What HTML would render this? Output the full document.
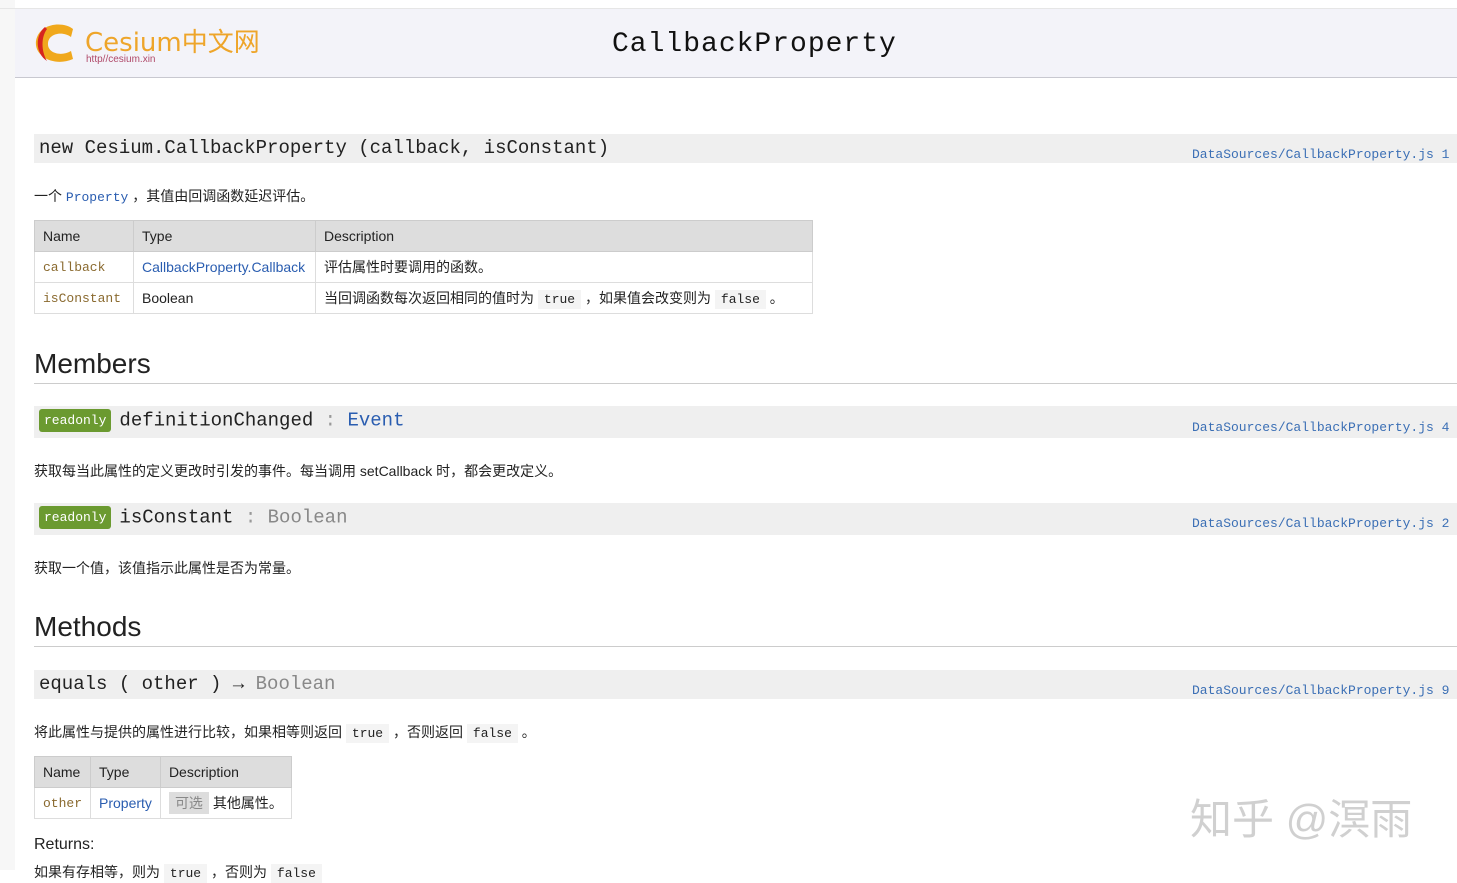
<!DOCTYPE html>
<html><head><meta charset="utf-8"><style>
*{margin:0;padding:0;box-sizing:border-box}
body{width:1457px;height:870px;overflow:hidden;background:#fff;font-family:"Liberation Sans","Noto Sans CJK SC",sans-serif;font-size:14px;color:#222;position:relative}
.strip{position:absolute;left:0;top:0;width:15px;height:870px;background:#f7f7f7}
.topline{position:absolute;left:0;top:8px;width:1457px;border-top:1px solid #e6e6e6}
.hdr{position:absolute;left:15px;top:9px;width:1442px;height:69px;background:#f3f3f9;border-bottom:1px solid #c8c8d0}
.mono{font-family:"Liberation Mono","Noto Sans CJK SC",monospace}
.title{position:absolute;left:612px;top:29px;font-size:28px;letter-spacing:1px;color:#111}
.abs{position:absolute}
.bar{position:absolute;left:34px;width:1423px;background:#efefef}
.src{position:absolute;left:1192px;font-size:13px;color:#3b6fb5;white-space:nowrap}
a,.lk{color:#2a5db0}
table{border-collapse:collapse;position:absolute;left:34px;font-size:14px}
td,th{border:1px solid #ddd;padding:0 8px;height:31px;text-align:left;font-weight:normal;white-space:nowrap}
th{background:#ddd;border-color:#ccc}
.nm{color:#8a6a2f;font-family:"Liberation Mono",monospace;font-size:13px}
.ro{display:inline-block;background:#6b9a30;color:#fff;font-family:"Liberation Mono",monospace;font-size:13px;border-radius:3px;padding:4px 5px;vertical-align:middle;margin-right:8px}
h2{position:absolute;left:34px;font-weight:normal;font-size:28px;color:#222}
.hr{position:absolute;left:34px;width:1423px;border-top:1px solid #ccc}
code{font-family:"Liberation Mono",monospace;font-size:13px;background:#f4f4f4;padding:2px 6px}
</style></head><body>
<div class="strip"></div><div class="topline"></div>
<div class="hdr">
<svg class="abs" style="left:18px;top:12px" width="44" height="44" viewBox="0 0 44 44"><path d="M40 8 C30 0 6 2 3 20 C1 36 22 46 40 38 L38 30 C28 36 14 32 15 22 C16 12 30 10 38 16 Z" fill="#f0a81c"/><path d="M12 6 C2 14 2 32 14 40 C8 30 8 16 14 8Z" fill="#d62420"/></svg>
<div class="abs" style="left:70px;top:13px;font-size:26px;color:#eea52a;font-family:'DejaVu Sans','Noto Sans CJK SC',sans-serif">Cesium中文网</div>
<div class="abs" style="left:71px;top:45px;font-size:10px;color:#b04a6a">http//cesium.xin</div>
</div>
<div class="title mono">CallbackProperty</div>

<div class="bar" style="top:134px;height:29px"></div>
<div class="abs mono" style="left:39px;top:137px;font-size:19px">new Cesium.CallbackProperty (callback, isConstant)</div>
<div class="src mono" style="top:147px">DataSources/CallbackProperty.js 1</div>
<div class="abs" style="left:34px;top:186px">一个 <span class="mono lk" style="font-size:13px">Property</span> ，其值由回调函数延迟评估。</div>

<table style="top:220px;width:779px">
<tr><th style="width:99px">Name</th><th style="width:182px">Type</th><th>Description</th></tr>
<tr><td class="nm">callback</td><td class="lk">CallbackProperty.Callback</td><td>评估属性时要调用的函数。</td></tr>
<tr><td class="nm">isConstant</td><td>Boolean</td><td>当回调函数每次返回相同的值时为 <code>true</code> ，如果值会改变则为 <code>false</code> 。</td></tr>
</table>

<h2 style="top:348px">Members</h2><div class="hr" style="top:383px"></div>

<div class="bar" style="top:406px;height:32px"></div>
<div class="abs" style="left:39px;top:409px"><span class="ro">readonly</span><span class="mono" style="font-size:19px;vertical-align:middle">definitionChanged <span style="color:#999">:</span> <span class="lk">Event</span></span></div>
<div class="src mono" style="top:420px">DataSources/CallbackProperty.js 4</div>
<div class="abs" style="left:34px;top:461px">获取每当此属性的定义更改时引发的事件。每当调用 setCallback 时，都会更改定义。</div>

<div class="bar" style="top:503px;height:32px"></div>
<div class="abs" style="left:39px;top:506px"><span class="ro">readonly</span><span class="mono" style="font-size:19px;vertical-align:middle">isConstant <span style="color:#999">:</span> <span style="color:#888">Boolean</span></span></div>
<div class="src mono" style="top:516px">DataSources/CallbackProperty.js 2</div>
<div class="abs" style="left:34px;top:558px">获取一个值，该值指示此属性是否为常量。</div>

<h2 style="top:611px">Methods</h2><div class="hr" style="top:646px"></div>

<div class="bar" style="top:670px;height:29px"></div>
<div class="abs mono" style="left:39px;top:673px;font-size:19px">equals ( other ) → <span style="color:#888">Boolean</span></div>
<div class="src mono" style="top:683px">DataSources/CallbackProperty.js 9</div>
<div class="abs" style="left:34px;top:722px">将此属性与提供的属性进行比较，如果相等则返回 <code>true</code> ，否则返回 <code>false</code> 。</div>

<table style="top:756px">
<tr><th>Name</th><th>Type</th><th>Description</th></tr>
<tr><td class="nm">other</td><td class="lk">Property</td><td><span style="background:#ddd;color:#888;padding:3px 6px">可选</span> 其他属性。</td></tr>
</table>
<div class="abs" style="left:34px;top:836px;font-size:16px">Returns:</div>
<div class="abs" style="left:34px;top:862px">如果有存相等，则为 <code>true</code> ，否则为 <code>false</code></div>
<div class="abs" style="left:1190px;top:786px;font-size:42px;color:rgba(150,150,150,0.45)">知乎 @溟雨</div>
</body></html>
